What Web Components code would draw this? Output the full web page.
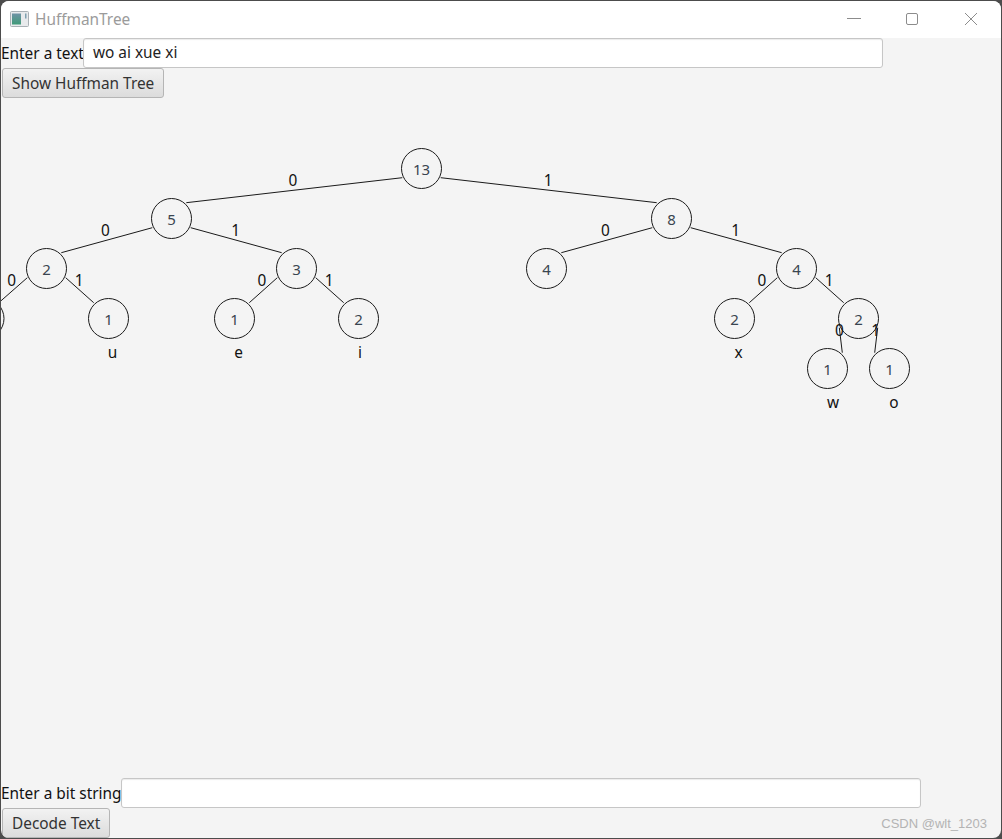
<!DOCTYPE html>
<html lang="en">
<head>
<meta charset="utf-8">
<title>HuffmanTree</title>
<style>
  html, body { margin: 0; padding: 0; height: 100%; background: #4c4c4c; overflow: hidden; }
</style>
</head>
<body>
<app-window caption="HuffmanTree">
  <form-row label="Enter a text" value="wo ai xue xi"></form-row>
  <fx-button>Show Huffman Tree</fx-button>
  <huffman-tree></huffman-tree>
  <form-row label="Enter a bit string"></form-row>
  <status-row>
    <fx-button>Decode Text</fx-button>
    <span slot="mark">CSDN @wlt_1203</span>
  </status-row>
</app-window>

<script>
class AppWindow extends HTMLElement {
    constructor() {
        super();
        this.attachShadow({ mode: 'open' });
        this.shadowRoot.innerHTML = `
            <style>
                :host {
                    display: flex;
                    flex-direction: column;
                    box-sizing: border-box;
                    width: 1000px;
                    height: 837px;
                    margin: 1px;
                    background: #f4f4f4;
                    border-radius: 8px;
                    overflow: hidden;
                    font-family: 'Noto Sans', 'Open Sans', sans-serif;
                    font-size: 15.4px;
                    color: #111;
                }
                .bar {
                    flex: none;
                    display: flex;
                    align-items: center;
                    box-sizing: border-box;
                    height: 37px;
                    padding-bottom: 1px;
                    background: #fff;
                    color: #9b9b9b;
                }
                .icon { margin-left: 9px; margin-right: 6px; }
                .caption { flex: 1; }
                .ctl { box-sizing: border-box; width: 58.5px; display: flex; justify-content: center; }
                .ctl svg { display: block; }
                .ctl.mid { padding-right: 1.5px; }
                .ctl:last-child { margin-right: 0.5px; }
                .body { flex: 1; min-height: 0; display: flex; flex-direction: column; }
            </style>
            <div class="bar">
                <svg class="icon" width="19" height="16" viewBox="0 0 19 16">
                    <defs>
                        <linearGradient id="ig" x1="0" y1="0" x2="0" y2="1">
                            <stop offset="0" stop-color="#6f93a6"/>
                            <stop offset="1" stop-color="#3f9a78"/>
                        </linearGradient>
                    </defs>
                    <rect x="0.5" y="0.5" width="18" height="15" rx="1" fill="#e8eaec" stroke="#a9b0b5"/>
                    <rect x="2" y="2.5" width="9" height="11" fill="url(#ig)"/>
                    <rect x="15" y="2.5" width="1.5" height="5" fill="#7f9fb0"/>
                </svg>
                <span class="caption"></span>
                <div class="ctl"><svg width="14" height="14" viewBox="0 0 14 14"><path d="M0 6.5h14" stroke="#8c8c8c" fill="none"/></svg></div>
                <div class="ctl mid"><svg width="14" height="14" viewBox="0 0 14 14"><rect x="1.5" y="1.5" width="11" height="11" rx="1.5" stroke="#8c8c8c" fill="none"/></svg></div>
                <div class="ctl"><svg width="14" height="14" viewBox="0 0 14 14"><path d="M1 1l12 12M13 1L1 13" stroke="#8c8c8c" fill="none"/></svg></div>
            </div>
            <div class="body"><slot></slot></div>
        `;
    }

    connectedCallback() {
        this.shadowRoot.querySelector('.caption').textContent = this.getAttribute('caption');
    }
}

class FormRow extends HTMLElement {
    constructor() {
        super();
        this.attachShadow({ mode: 'open' });
        this.shadowRoot.innerHTML = `
            <style>
                :host {
                    display: flex;
                    align-items: center;
                    height: 30px;
                    flex: none;
                }
                .label { white-space: nowrap; margin-right: -1px; }
                .field {
                    box-sizing: border-box;
                    width: 800px;
                    height: 30px;
                    padding: 0 9px;
                    background: #fff;
                    border: 1px solid #c6c6c6;
                    border-radius: 3px;
                    box-shadow: inset 0 1px 1px #ececec;
                    color: #222;
                    line-height: 28px;
                    white-space: nowrap;
                }
            </style>
            <span class="label"></span>
            <div class="field"></div>
        `;
    }

    connectedCallback() {
        this.shadowRoot.querySelector('.label').textContent = this.getAttribute('label');
        this.shadowRoot.querySelector('.field').textContent = this.getAttribute('value') || '';
    }
}

class FxButton extends HTMLElement {
    constructor() {
        super();
        this.attachShadow({ mode: 'open' });
        this.shadowRoot.innerHTML = `
            <style>
                :host {
                    display: block;
                    flex: none;
                    align-self: flex-start;
                    box-sizing: border-box;
                    height: 30px;
                    margin-left: 1px;
                    padding: 0 9px;
                    line-height: 29px;
                    color: #333;
                    background: linear-gradient(#f2f2f2, #dcdcdc);
                    border: 1px solid #b5b5b5;
                    border-radius: 3px;
                    white-space: nowrap;
                }
            </style>
            <slot></slot>
        `;
    }
}

class StatusRow extends HTMLElement {
    constructor() {
        super();
        this.attachShadow({ mode: 'open' });
        this.shadowRoot.innerHTML = `
            <style>
                :host {
                    display: flex;
                    justify-content: space-between;
                    align-items: center;
                    flex: none;
                    height: 30px;
                    padding-right: 14px;
                }
                ::slotted([slot=mark]) {
                    font-family: 'Liberation Sans', sans-serif;
                    font-size: 13px;
                    color: #b3b3b3;
                }
            </style>
            <slot></slot>
            <slot name="mark"></slot>
        `;
    }
}

// x, y, value, parent index, leaf letter
const NODES = [
    [421.5, 168.5, 13, -1],
    [171.5, 218.5, 5, 0],
    [671.5, 218.5, 8, 0],
    [46.5, 268.5, 2, 1],
    [296.5, 268.5, 3, 1],
    [546.5, 268.5, 4, 2],
    [796.5, 268.5, 4, 2],
    [-16, 318.5, 1, 3],
    [108.5, 318.5, 1, 3, 'u'],
    [234.5, 318.5, 1, 4, 'e'],
    [358.5, 318.5, 2, 4, 'i'],
    [734.5, 318.5, 2, 6, 'x'],
    [858.5, 318.5, 2, 6],
    [827.5, 368.5, 1, 12, 'w'],
    [889.5, 368.5, 1, 12, 'o']
];
const R = 20;

class HuffmanTree extends HTMLElement {
    constructor() {
        super();
        this.attachShadow({ mode: 'open' });
        let lines = '', circles = '', labels = '';
        for (const [x, y, value, parent, leaf] of NODES) {
            circles += `<circle cx="${x}" cy="${y}" r="${R}"/>`;
            // the leftmost node hangs off the canvas, only its arc shows
            if (x > 0) labels += `<text class="val" x="${x}" y="${y + 6}">${value}</text>`;
            if (leaf) {
                const lx = leaf === 'w' ? x + 5.5 : leaf === 'o' ? x + 4.5 : leaf === 'i' ? x + 1.5 : x + 4;
                labels += `<text class="edge" x="${lx}" y="${y + 39.5}">${leaf}</text>`;
            }
            if (parent < 0) continue;
            const p = NODES[parent];
            const bit = x < p[0] ? 0 : 1;
            const dir = bit ? 1 : -1;
            // edges leave low on the parent and land high on the child
            lines += `<line x1="${p[0] + dir * 19.2}" y1="${p[1] + 9.2}" x2="${x - dir * 14.8}" y2="${y - 15.8}"/>`;
            const bx = (x + p[0]) / 2 + (bit ? 1.6 : -3.7);
            const by = (y + p[1]) / 2 - 7.5;
            labels += `<text class="edge" x="${bx}" y="${by}">${bit}</text>`;
        }
        this.shadowRoot.innerHTML = `
            <style>
                :host { display: block; flex: 1; min-height: 0; overflow: hidden; }
                svg { display: block; width: 1000px; height: 100%; }
                line, circle { stroke: #1a1a1a; stroke-width: 1; }
                circle { fill: none; }
                text { font-family: 'Noto Sans', 'Open Sans', sans-serif; font-size: 15.4px; text-anchor: middle; }
                .val { fill: #3a4550; font-size: 15px; }
                .edge { fill: #111; }
            </style>
            <svg viewBox="1 98 1000 680" preserveAspectRatio="xMinYMin">${lines}${circles}${labels}</svg>
        `;
    }
}

customElements.define('app-window', AppWindow);
customElements.define('form-row', FormRow);
customElements.define('fx-button', FxButton);
customElements.define('status-row', StatusRow);
customElements.define('huffman-tree', HuffmanTree);
</script>
</body>
</html>
